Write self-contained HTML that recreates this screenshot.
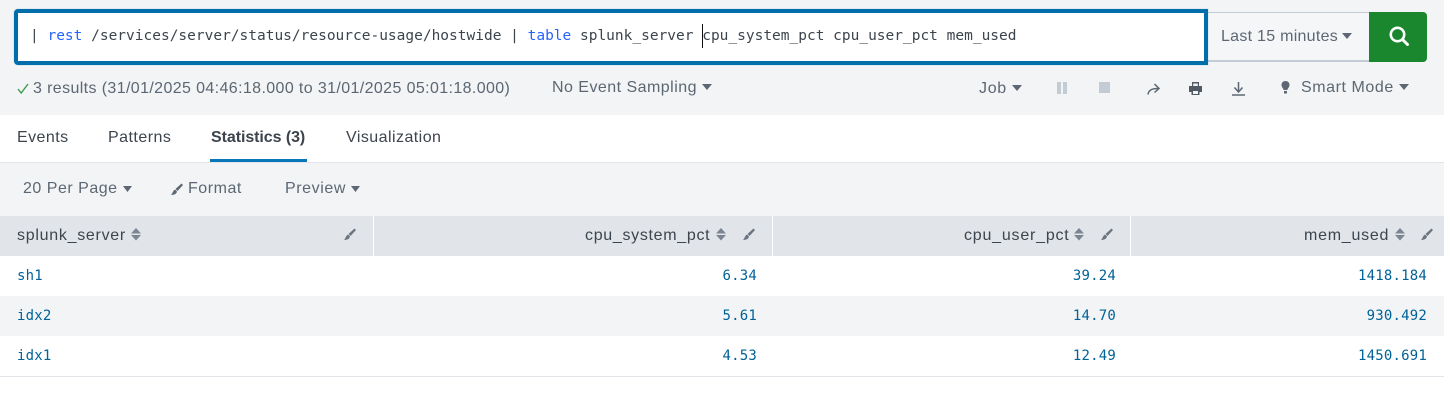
<!DOCTYPE html>
<html><head><meta charset="utf-8">
<style>
html,body{margin:0;padding:0;background:#fff}
#p{position:relative;width:1444px;height:403px;overflow:hidden;background:#fff;font-family:"Liberation Sans",sans-serif;font-size:16px;color:#5c6773}
.a{position:absolute}
.t{position:absolute;white-space:nowrap;line-height:20px}
.m{position:absolute;white-space:nowrap;line-height:20px;font-family:"DejaVu Sans Mono",monospace;font-size:14px;letter-spacing:.2px;color:#006299}
svg{position:absolute;overflow:visible}
.th{color:#3c444d}
</style></head><body><div id="p">
<div class="a" style="left:0;top:0;width:1444px;height:115px;background:#f2f4f5"></div>
<div class="a" style="left:0;top:162px;width:1444px;height:54px;background:#f2f4f5;border-top:1px solid #e1e5e8;box-sizing:border-box"></div>

<div class="a" style="left:1200px;top:12px;width:170px;height:50px;background:#f5f6f8;border-top:1px solid #c3cbd4;border-bottom:2px solid #c3cbd4;box-sizing:border-box"></div>
<div class="a" style="left:14px;top:9px;width:1194px;height:56px;box-sizing:border-box;border:4px solid #006eaa;border-radius:4px 0 0 4px;background:#fff;box-shadow:0 0 1px #7fb5d3"></div>
<div class="m" style="left:30px;top:26px;font-size:14.5px;letter-spacing:0;color:#3c444d">| <span style="color:#2662fc">rest</span> /services/server/status/resource-usage/hostwide | <span style="color:#2662fc">table</span> splunk_server cpu_system_pct cpu_user_pct mem_used</div>
<div class="a" style="left:702px;top:24px;width:1px;height:24px;background:#111"></div>
<div class="t" style="left:1221px;top:27px;letter-spacing:.27px">Last 15 minutes</div>
<svg style="left:1342px;top:33px" width="10" height="6"><path d="M0 0H10L5 6Z" fill="#5c6773"/></svg>
<div class="a" style="left:1369px;top:12px;width:58px;height:50px;background:#1a872e;border-radius:0 4px 4px 0"></div>
<svg style="left:1388px;top:26px" width="24" height="22" fill="none" stroke="#fff"><circle cx="9.500" cy="8.500" r="6.700" stroke-width="2.600"/><path d="M14.500 13.500L19.500 18.500" stroke-width="3" stroke-linecap="round"/></svg>

<svg style="left:17px;top:83px" width="12" height="11" fill="none" stroke="#3c9a4d" stroke-width="1.400"><path d="M1 6L4.200 10L11 1"/></svg>
<div class="t" style="left:33px;top:79px;letter-spacing:.38px">3 results (31/01/2025 04:46:18.000 to 31/01/2025 05:01:18.000)</div>
<div class="t" style="left:552px;top:78px;letter-spacing:.47px">No Event Sampling</div>
<svg style="left:702px;top:84px" width="10" height="6"><path d="M0 0H10L5 6Z" fill="#5c6773"/></svg>
<div class="t" style="left:979px;top:79px;letter-spacing:.7px">Job</div>
<svg style="left:1012px;top:85px" width="10" height="6"><path d="M0 0H10L5 6Z" fill="#5c6773"/></svg>
<div class="a" style="left:1057px;top:82px;width:4px;height:12px;background:#c3cbd4"></div>
<div class="a" style="left:1063px;top:82px;width:4px;height:12px;background:#c3cbd4"></div>
<div class="a" style="left:1099px;top:82px;width:11px;height:11px;background:#c3cbd4"></div>
<svg style="left:1147px;top:83px" width="13" height="12" fill="none" stroke="#5c6773" stroke-width="1.500"><path d="M1 11.500C1.500 7 5 5.500 11 5.500M7.500 1L12 5.500L7.500 9.500"/></svg>
<svg style="left:1189px;top:82px" width="13" height="13"><path d="M3 0H10V4H13V10H10.500V13H2.500V10H0V4H3Z" fill="#4f5a65"/><path d="M4 9H9V12H4Z" fill="#f2f4f5"/><path d="M4.200 1.500H8.800V4H4.200Z" fill="#f2f4f5"/></svg>
<svg style="left:1232px;top:82px" width="13" height="14" fill="none" stroke="#5c6773" stroke-width="1.500"><path d="M6.500 0V9M2.500 5.500L6.500 10L10.500 5.500M0 13H13"/></svg>
<svg style="left:1281px;top:81px" width="9" height="13"><path d="M4.500 0C7 0 8.500 1.800 8.500 4C8.500 6 7 7 6.300 9H2.700C2 7 .5 6 .5 4C.5 1.800 2 0 4.500 0Z" fill="#5c6773"/><path d="M3 10H6V12.500H3Z" fill="#5c6773"/></svg>
<div class="t" style="left:1301px;top:78px;letter-spacing:.57px">Smart Mode</div>
<svg style="left:1399px;top:84px" width="10" height="6"><path d="M0 0H10L5 6Z" fill="#5c6773"/></svg>

<div class="t" style="left:17px;top:128px;color:#3c444d;letter-spacing:.43px">Events</div>
<div class="t" style="left:108px;top:128px;color:#3c444d;letter-spacing:.47px">Patterns</div>
<div class="t" style="left:211px;top:128px;color:#3c444d;font-weight:bold;letter-spacing:-.07px">Statistics (3)</div>
<div class="t" style="left:346px;top:128px;color:#3c444d;letter-spacing:.45px">Visualization</div>
<div class="a" style="left:210px;top:159px;width:97px;height:3px;background:#0877ba"></div>

<div class="t" style="left:23px;top:179px;letter-spacing:.51px">20 Per Page</div>
<svg style="left:123px;top:186px" width="9" height="6"><path d="M0 0H9L4.500 6Z" fill="#5c6773"/></svg>
<svg style="left:171px;top:183px" width="12" height="12"><path d="M10.500 .5L12 2L6.500 8L4.500 6ZM4 6.500L6 8.500C5.500 11 3 12 0 12C1.500 11 1.500 8 4 6.500Z" fill="#5c6773"/></svg>
<div class="t" style="left:188px;top:179px;letter-spacing:.53px">Format</div>
<div class="t" style="left:285px;top:179px;letter-spacing:.58px">Preview</div>
<svg style="left:351px;top:186px" width="9" height="6"><path d="M0 0H9L4.500 6Z" fill="#5c6773"/></svg>

<div class="a" style="left:0;top:216px;width:1444px;height:40px;background:#e1e5e9"></div>
<div class="a" style="left:373px;top:216px;width:1px;height:40px;background:#fff"></div>
<div class="a" style="left:772px;top:216px;width:1px;height:40px;background:#fff"></div>
<div class="a" style="left:1130px;top:216px;width:1px;height:40px;background:#fff"></div>

<div class="t th" style="left:17px;top:226px;letter-spacing:.72px">splunk_server</div>
<svg style="left:131px;top:228px" width="10" height="13" fill="#7c8693"><path d="M5 0L10 5.500H0ZM0 7H10L5 12.500Z"/></svg>
<svg style="left:344px;top:228px" width="12" height="12"><path d="M10.500 .5L12 2L6.500 8L4.500 6ZM4 6.500L6 8.500C5.500 11 3 12 0 12C1.500 11 1.500 8 4 6.500Z" fill="#6b7480"/></svg>

<div class="t th" style="left:585px;top:226px;letter-spacing:.69px">cpu_system_pct</div>
<svg style="left:716px;top:228px" width="10" height="13" fill="#7c8693"><path d="M5 0L10 5.500H0ZM0 7H10L5 12.500Z"/></svg>
<svg style="left:743px;top:228px" width="12" height="12"><path d="M10.500 .5L12 2L6.500 8L4.500 6ZM4 6.500L6 8.500C5.500 11 3 12 0 12C1.500 11 1.500 8 4 6.500Z" fill="#6b7480"/></svg>

<div class="t th" style="left:964px;top:226px;letter-spacing:.79px">cpu_user_pct</div>
<svg style="left:1074px;top:228px" width="10" height="13" fill="#7c8693"><path d="M5 0L10 5.500H0ZM0 7H10L5 12.500Z"/></svg>
<svg style="left:1101px;top:228px" width="12" height="12"><path d="M10.500 .5L12 2L6.500 8L4.500 6ZM4 6.500L6 8.500C5.500 11 3 12 0 12C1.500 11 1.500 8 4 6.500Z" fill="#6b7480"/></svg>

<div class="t th" style="left:1304px;top:226px;letter-spacing:.75px">mem_used</div>
<svg style="left:1395px;top:228px" width="10" height="13" fill="#7c8693"><path d="M5 0L10 5.500H0ZM0 7H10L5 12.500Z"/></svg>
<svg style="left:1421px;top:228px" width="12" height="12"><path d="M10.500 .5L12 2L6.500 8L4.500 6ZM4 6.500L6 8.500C5.500 11 3 12 0 12C1.500 11 1.500 8 4 6.500Z" fill="#6b7480"/></svg>

<div class="a" style="left:0;top:296px;width:1444px;height:40px;background:#f2f4f5"></div>
<div class="a" style="left:0;top:376px;width:1444px;height:1px;background:#e1e5e9"></div>

<div class="m" style="left:17px;top:266px">sh1</div>
<div class="m" style="left:17px;top:306px">idx2</div>
<div class="m" style="left:17px;top:346px">idx1</div>

<div class="m" style="right:687px;top:266px">6.34</div>
<div class="m" style="right:687px;top:306px">5.61</div>
<div class="m" style="right:687px;top:346px">4.53</div>

<div class="m" style="right:328px;top:266px">39.24</div>
<div class="m" style="right:328px;top:306px">14.70</div>
<div class="m" style="right:328px;top:346px">12.49</div>

<div class="m" style="right:17px;top:266px">1418.184</div>
<div class="m" style="right:17px;top:306px">930.492</div>
<div class="m" style="right:17px;top:346px">1450.691</div>
</div></body></html>
